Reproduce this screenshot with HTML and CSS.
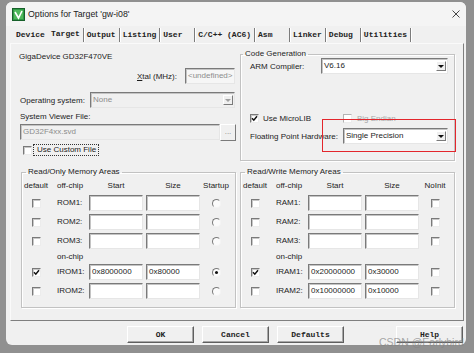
FILE: index.html
```html
<!DOCTYPE html>
<html lang="en">
<head>
    <meta charset="UTF-8">
    <title>Options for Target 'gw-i08'</title>
    <link rel="stylesheet" href="styles.css">
</head>
<body>

<div class="dialog">
    <div class="titlebar">
        <svg class="app-icon" viewBox="0 0 13 13">
            <rect x="0.5" y="0.5" width="12" height="12" fill="#2f9a45" stroke="#17602a"/>
            <rect x="2" y="2" width="9" height="9" fill="#4fb85c"/>
            <polyline points="3,4 6.5,10 10,3" fill="none" stroke="#fff" stroke-width="1.6"/>
        </svg>
        <span class="title">Options for Target 'gw-i08'</span>
        <svg class="close" viewBox="0 0 8 8">
            <line x1="0.5" y1="0.5" x2="7.5" y2="7.5" stroke="#333" stroke-width="0.9"/>
            <line x1="7.5" y1="0.5" x2="0.5" y2="7.5" stroke="#333" stroke-width="0.9"/>
        </svg>
    </div>

    <div class="tabs">
        <span class="tab tab-plain">Device</span>
        <span class="tab active">Target</span>
        <span class="tab">Output</span>
        <span class="tab">Listing</span>
        <span class="tab">User</span>
        <span class="tab">C/C++ (AC6)</span>
        <span class="tab">Asm</span>
        <span class="tab">Linker</span>
        <span class="tab">Debug</span>
        <span class="tab">Utilities</span>
    </div>

    <div class="panel">
        <div class="top">
            <div class="device-col">
                <div class="device-name">GigaDevice GD32F470VE</div>
                <div class="xtal-row">
                    <span class="xtal-label"><u>X</u>tal (MHz):</span>
                    <span class="field field-xtal">&lt;undefined&gt;</span>
                </div>
                <div class="os-row">
                    <span>Operating system:</span>
                    <span class="field select select-os disabled">
                        <span class="select-text">None</span>
                        <span class="drop"></span>
                    </span>
                </div>
                <div class="svf-label">System Viewer File:</div>
                <div class="svf-row">
                    <span class="field field-svf disabled">GD32F4xx.svd</span>
                    <span class="browse">...</span>
                </div>
                <div class="custom-row">
                    <span class="check"></span>
                    <span class="focus-label">Use Custom File</span>
                </div>
            </div>

            <fieldset class="group">
                <legend>Code Generation</legend>
                <div class="codegen">
                    <div class="cg-row">
                        <span>ARM Compiler:</span>
                        <span class="field select select-arm">
                            <span class="select-text">V6.16</span>
                            <span class="drop"></span>
                        </span>
                    </div>
                    <div class="cg-checks">
                        <span class="check checked">
                            <svg viewBox="0 0 7 7"><polyline points="1,3.2 2.8,5.2 6,1.2" fill="none" stroke="#111" stroke-width="1.5"/></svg>
                        </span>
                        <span>Use MicroLIB</span>
                        <span class="endian">
                            <span class="check check-off"></span>
                            <span class="muted">Big Endian</span>
                        </span>
                    </div>
                    <div class="cg-row cg-fph">
                        <span>Floating Point Hardware:</span>
                        <span class="field select select-fph">
                            <span class="select-text">Single Precision</span>
                            <span class="drop"></span>
                        </span>
                    </div>
                </div>
            </fieldset>
        </div>

        <div class="memory">
            <fieldset class="group group-rom">
                <legend>Read/Only Memory Areas</legend>
                <div class="mem-grid">
                    <span class="head">default</span>
                    <span class="head head-left">off-chip</span>
                    <span class="head">Start</span>
                    <span class="head">Size</span>
                    <span class="head">Startup</span>

                    <span class="check"></span><span class="mem-label">ROM1:</span>
                    <span class="field"></span><span class="field"></span><span class="radio"></span>

                    <span class="check"></span><span class="mem-label">ROM2:</span>
                    <span class="field"></span><span class="field"></span><span class="radio"></span>

                    <span class="check"></span><span class="mem-label">ROM3:</span>
                    <span class="field"></span><span class="field"></span><span class="radio"></span>

                    <span></span><span class="mem-label">on-chip</span>
                    <span></span><span></span><span></span>

                    <span class="check checked">
                        <svg viewBox="0 0 7 7"><polyline points="1,3.2 2.8,5.2 6,1.2" fill="none" stroke="#111" stroke-width="1.5"/></svg>
                    </span>
                    <span class="mem-label">IROM1:</span>
                    <span class="field">0x8000000</span><span class="field">0x80000</span><span class="radio selected"></span>

                    <span class="check"></span><span class="mem-label">IROM2:</span>
                    <span class="field"></span><span class="field"></span><span class="radio"></span>
                </div>
            </fieldset>

            <fieldset class="group">
                <legend>Read/Write Memory Areas</legend>
                <div class="mem-grid">
                    <span class="head">default</span>
                    <span class="head head-left">off-chip</span>
                    <span class="head">Start</span>
                    <span class="head">Size</span>
                    <span class="head">NoInit</span>

                    <span class="check"></span><span class="mem-label">RAM1:</span>
                    <span class="field"></span><span class="field"></span><span class="check"></span>

                    <span class="check"></span><span class="mem-label">RAM2:</span>
                    <span class="field"></span><span class="field"></span><span class="check"></span>

                    <span class="check"></span><span class="mem-label">RAM3:</span>
                    <span class="field"></span><span class="field"></span><span class="check"></span>

                    <span></span><span class="mem-label">on-chip</span>
                    <span></span><span></span><span></span>

                    <span class="check checked">
                        <svg viewBox="0 0 7 7"><polyline points="1,3.2 2.8,5.2 6,1.2" fill="none" stroke="#111" stroke-width="1.5"/></svg>
                    </span>
                    <span class="mem-label">IRAM1:</span>
                    <span class="field">0x20000000</span><span class="field">0x30000</span><span class="check"></span>

                    <span class="check"></span><span class="mem-label">IRAM2:</span>
                    <span class="field">0x10000000</span><span class="field">0x10000</span><span class="check"></span>
                </div>
            </fieldset>
        </div>
    </div>

    <div class="buttons">
        <span class="btn">OK</span>
        <span class="btn">Cancel</span>
        <span class="btn">Defaults</span>
        <span class="btn btn-help">Help</span>
    </div>

    <!-- red annotation drawn over the dialog -->
    <div class="highlight"></div>
</div>

<div class="watermark">CSDN @Earlybird</div>

</body>
</html>
```

FILE: styles.css
```css
* {
    box-sizing: border-box;
}
body {
    margin: 0;
    background-color: #909090;
    font-family: 'Liberation Sans', Arial, sans-serif;
    font-size: 8px;
    color: #1c1c1c;
}
.dialog {
    position: relative;
    width: 460px;
    height: 343px;
    margin: 2px 0 0 6px;
    background-color: #f0f0f0;
    border-radius: 6px;
    display: flex;
    flex-direction: column;
    overflow: hidden;
}
.titlebar {
    height: 24px;
    display: flex;
    align-items: center;
    padding: 0 6px;
    background-color: #f4f4f4;
}
.app-icon {
    width: 13px;
    height: 13px;
    margin-right: 3px;
}
.title {
    font-size: 8.8px;
    color: #222;
}
.close {
    width: 8px;
    height: 8px;
    margin-left: auto;
}
.tabs {
    height: 17px;
    display: flex;
    align-items: flex-end;
    padding: 2px 0 1px 7px;
}
.tab {
    height: 14px;
    line-height: 14px;
    min-width: 35px;
    padding: 0 3px;
    font-family: 'Liberation Mono', monospace;
    font-weight: bold;
    font-size: 8px;
    color: #222;
    white-space: pre;
    border-right: 1px solid #7c7c7c;
    box-shadow: 1px 0 0 #fff;
}
.tab-plain {
    border-right: none;
    box-shadow: none;
}
.tab.active {
    line-height: 11px;
    padding-bottom: 3px;
}
.panel {
    height: 278px;
    margin: 0 2px 0 4px;
    padding: 0 8px;
    border: 1px solid;
    border-color: #fafafa #7f7f7f #7f7f7f #fafafa;
}
.top, .memory {
    display: grid;
    grid-template-columns: 217px 215px;
    column-gap: 4px;
}
.device-col {
    display: flex;
    flex-direction: column;
}
.device-name {
    margin-top: 7px;
    height: 12px;
    line-height: 12px;
}
.xtal-row {
    margin-top: 5px;
    height: 16px;
    display: flex;
    align-items: center;
    justify-content: flex-end;
    padding-right: 1px;
}
.xtal-label {
    margin-right: 8px;
}
.field {
    height: 16px;
    line-height: 14px;
    padding: 0 2px;
    background-color: #fff;
    border: 1px solid;
    border-color: #7a7a7a #e6e6e6 #e6e6e6 #7a7a7a;
    box-shadow: inset 1px 1px 0 #c4c4c4;
    white-space: nowrap;
    overflow: hidden;
}
.field.disabled {
    background-color: #f0f0f0;
    color: #8c8c8c;
}
.field-xtal {
    width: 50px;
    color: #8c8c8c;
    background-color: #f6f6f6;
}
.select {
    display: flex;
    align-items: center;
    padding-right: 1px;
}
.select-text {
    flex: 1;
}
.drop {
    width: 10px;
    height: 10px;
    border: 1px solid;
    border-color: #fff #7a7a7a #7a7a7a #fff;
    background-color: #f0f0f0;
    display: flex;
    align-items: center;
    justify-content: center;
}
.drop::after {
    content: "";
    border-left: 3px solid transparent;
    border-right: 3px solid transparent;
    border-top: 3px solid #111;
}
.disabled .drop::after {
    border-top-color: #a0a0a0;
}
.os-row {
    margin-top: 8px;
    height: 16px;
    display: flex;
    align-items: center;
    justify-content: space-between;
    padding: 0 1px;
}
.select-os {
    width: 145px;
}
.svf-label {
    margin-top: 4px;
    height: 10px;
    line-height: 10px;
    padding-left: 1px;
}
.svf-row {
    margin-top: 2px;
    display: flex;
    padding-left: 1px;
}
.field-svf {
    flex: 1;
}
.browse {
    width: 16px;
    height: 17px;
    line-height: 14px;
    text-align: center;
    color: #888;
    border: 1px solid;
    border-color: #fff #7a7a7a #7a7a7a #fff;
}
.custom-row {
    margin-top: 3px;
    height: 12px;
    display: flex;
    align-items: center;
    padding-left: 4px;
}
.focus-label {
    margin-left: 1px;
    padding: 0 2px 0 3px;
    line-height: 10px;
    border: 1px dotted #333;
}
.check {
    width: 9px;
    height: 9px;
    background-color: #fff;
    border: 1px solid;
    border-color: #7a7a7a #ececec #ececec #7a7a7a;
    box-shadow: inset 1px 1px 0 #c8c8c8;
    display: flex;
    justify-content: center;
    align-items: center;
    justify-self: center;
}
.check svg {
    width: 7px;
    height: 7px;
}
.check-off {
    border-color: #b4b4b4 #ececec #ececec #b4b4b4;
    box-shadow: none;
}
.muted {
    color: #a8a8a8;
}
.radio {
    width: 9px;
    height: 9px;
    border-radius: 50%;
    border: 1px solid;
    border-color: #7a7a7a #f4f4f4 #f4f4f4 #7a7a7a;
    background-color: #fbfbfb;
    justify-self: center;
    display: flex;
    justify-content: center;
    align-items: center;
}
.radio.selected::after {
    content: "";
    width: 3px;
    height: 3px;
    border-radius: 50%;
    background-color: #111;
}
.group {
    margin: 0;
    padding: 0;
    min-width: 0;
    border: 1px solid #c2c2c2;
    box-shadow: inset 1px 1px 0 #fff, 1px 1px 0 #fff;
}
.group legend {
    margin-left: 2px;
    padding: 0 2px;
    line-height: 10px;
}
.codegen {
    padding: 0 6px 16px 9px;
}
.top .group {
    margin-top: 5px;
}
.cg-row {
    height: 16px;
    display: flex;
    align-items: center;
    justify-content: space-between;
    margin-top: -1px;
}
.select-arm {
    width: 127px;
}
.cg-checks {
    margin-top: 39px;
    height: 10px;
    display: flex;
    align-items: center;
}
.cg-checks > .check {
    margin-right: 4px;
}
.endian {
    margin-left: auto;
    width: 105px;
    display: flex;
    align-items: center;
}
.endian .check {
    margin-right: 5px;
}
.cg-fph {
    margin-top: 5px;
}
.select-fph {
    width: 105px;
}
.memory {
    margin-top: 6px;
}
.group-rom {
    margin-left: 2px;
}
.memory .group legend {
    margin-left: 4px;
}
.mem-grid {
    display: grid;
    grid-template-columns: 28px 33px 54px 54px 26px;
    grid-template-rows: 12px 16px 16px 16px 9px 16px 16px;
    column-gap: 3px;
    row-gap: 3px;
    align-items: center;
    padding: 3px 0 8px 0;
}
.head {
    text-align: center;
    line-height: 12px;
}
.head-left {
    text-align: left;
    padding-left: 4px;
}
.mem-label {
    padding-left: 4px;
    line-height: 10px;
}
.buttons {
    height: 17px;
    margin-top: 5px;
    display: flex;
    gap: 8px;
    padding: 0 3px 0 121px;
}
.btn {
    width: 67px;
    height: 17px;
    line-height: 15px;
    text-align: center;
    font-family: 'Liberation Mono', monospace;
    font-weight: bold;
    font-size: 8px;
    color: #222;
    background-color: #f0f0f0;
    border: 1px solid;
    border-color: #fff #5f5f5f #5f5f5f #fff;
    box-shadow: inset -1px -1px 0 #a8a8a8;
}
.btn-help {
    margin-left: auto;
}
.highlight {
    position: absolute;
    left: 316px;
    top: 117px;
    width: 134px;
    height: 33px;
    border: 1.5px solid #e3262c;
}
.watermark {
    position: absolute;
    left: 379px;
    top: 336px;
    font-size: 10.5px;
    color: rgba(130, 130, 130, 0.7);
    white-space: nowrap;
}
```
